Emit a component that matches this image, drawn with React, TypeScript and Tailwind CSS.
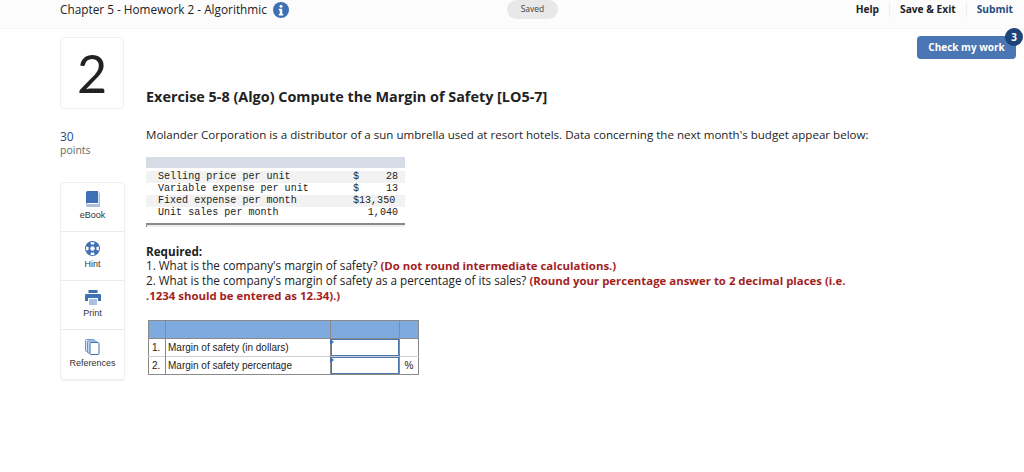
const font = { fontFamily: '"Open Sans", "Lato", sans-serif' }

const budgetRows = [
  { label: 'Selling price per unit', sign: '$', value: '28', shaded: true },
  { label: 'Variable expense per unit', sign: '$', value: '13', shaded: false },
  { label: 'Fixed expense per month', sign: '$13,350', value: '', shaded: true },
  { label: 'Unit sales per month', sign: '', value: '1,040', shaded: false },
]

const InfoIcon = () => (
  <svg width="16" height="16" viewBox="0 0 16 16">
    <circle cx="8" cy="8" r="8" fill="#3f6fb5" />
    <circle cx="8" cy="4.2" r="1.5" fill="#fff" />
    <path d="M5.8 6.8h3.4v5h1v1.6H5.8v-1.6h1v-3.4h-1z" fill="#fff" />
  </svg>
)

const BookIcon = () => (
  <svg width="14" height="16" viewBox="0 0 14 16">
    <path d="M0 1.5A1.5 1.5 0 0 1 1.5 0H12v12H1.5A1.5 1.5 0 0 0 0 13.5z" fill="#3f6fb5" />
    <path d="M12.5 1.5H14V16H1.5A1.5 1.5 0 0 1 0 14.5v-.5a1 1 0 0 1 1-1h11.5z" fill="#a9c0e0" />
  </svg>
)

const HintIcon = () => (
  <svg width="15" height="15" viewBox="0 0 16 16">
    <circle cx="8" cy="8" r="8" fill="#3f6fb5" />
    <circle cx="8" cy="8" r="2.4" fill="#fff" />
    <path d="M5.8 1.2h4.4l-.6 2.6H6.4zM5.8 14.8h4.4l-.6-2.6H6.4zM1.2 5.8v4.4l2.6-.6V6.4zM14.8 5.8v4.4l-2.6-.6V6.4z" fill="#fff" />
  </svg>
)

const PrintIcon = () => (
  <svg width="16" height="15" viewBox="0 0 16 15">
    <rect x="3.5" y="0" width="9" height="3" fill="#3f6fb5" />
    <path d="M1 4h14a1 1 0 0 1 1 1v6h-3V8H3v3H0V5a1 1 0 0 1 1-1z" fill="#3f6fb5" />
    <rect x="4" y="9" width="8" height="6" fill="#a9c0e0" />
  </svg>
)

const RefIcon = () => (
  <svg width="15" height="16" viewBox="0 0 15 16">
    <rect x="0.5" y="0.5" width="9" height="12" rx="1" fill="#dbe5f3" stroke="#6f95cc" />
    <rect x="2.5" y="2" width="9" height="12" rx="1" fill="#c5d6ec" stroke="#6f95cc" />
    <rect x="5" y="3.5" width="9" height="12" rx="1" fill="#fff" stroke="#3f6fb5" />
  </svg>
)

const tools = [
  { label: 'eBook', icon: <BookIcon /> },
  { label: 'Hint', icon: <HintIcon /> },
  { label: 'Print', icon: <PrintIcon /> },
  { label: 'References', icon: <RefIcon /> },
]

function AnswerInput() {
  return (
    <div className="relative h-full w-full border-[1.5px] border-[#4a76b0] bg-white">
      <div className="absolute left-[-2px] top-[-1px] h-0 w-0 border-y-[3px] border-l-[4px] border-y-transparent border-l-[#3f6fb5]" />
    </div>
  )
}

export default function App() {
  return (
    <div className="h-[472px] w-[1024px] overflow-hidden bg-white text-[#222]" style={font}>
      <header className="flex h-[29px] items-center border-b border-[#f5f5f5] bg-[#fcfcfc] pl-[60px] pr-[11px]">
        <div className="flex w-[430px] items-center gap-[6px] pb-[9px] text-[11.8px]">
          <span>Chapter 5 - Homework 2 - Algorithmic</span>
          <InfoIcon />
        </div>
        <div className="mb-[9px] ml-[17px] flex h-[19px] w-[51px] items-center justify-center rounded-full bg-[#e8e8e8] text-[8.5px] text-[#444]">Saved</div>
        <nav className="ml-auto flex items-center pb-[9px] text-[10.2px] font-bold">
          <span className="border-r border-[#eee] pr-[10px]">Help</span>
          <span className="border-r border-[#eee] pl-[10px] pr-[10px]">Save &amp; Exit</span>
          <span className="pl-[10px] text-[#2a4d80]">Submit</span>
        </nav>
      </header>

      <div className="flex pl-[60px]">
        <aside className="w-[86px] shrink-0 pt-[8px]">
          <div className="flex h-[72px] w-[64px] items-center justify-center rounded border border-[#f0f0f0] text-[52px] leading-none" style={{ fontFamily: '"Lato", sans-serif' }}>2</div>
          <div className="mt-[21px] text-[12px] leading-[14px] text-[#2a4d80]">30</div>
          <div className="text-[10.5px] leading-[13px] text-[#666]">points</div>
          <div className="mt-[25px] w-[65px] rounded border border-[#f0f0f0] shadow-[0_1px_1px_#eee]">
            {tools.map((t) => (
              <div key={t.label} className="flex h-[49px] flex-col items-center justify-end border-b border-[#eaeaea] pb-[10px] last:border-b-0">
                {t.icon}
                <span className="mt-[3px] text-[9px] leading-[11px] text-[#333]" style={{ fontFamily: '"Liberation Sans", sans-serif' }}>{t.label}</span>
              </div>
            ))}
          </div>
        </aside>

        <main className="w-[771px] shrink-0">
          <h1 className="mt-[58px] text-[14.4px] font-bold leading-[20px]">Exercise 5-8 (Algo) Compute the Margin of Safety [LO5-7]</h1>
          <p className="mt-[19px] text-[11.57px] leading-[18px]">Molander Corporation is a distributor of a sun umbrella used at resort hotels. Data concerning the next month's budget appear below:</p>

          <div className="mt-[13px] w-[259px]">
            <div className="h-[11px] bg-[#d6dce5]" />
            <div className="pt-[3px] text-[10.05px] leading-[12px]" style={{ fontFamily: '"Liberation Mono", monospace' }}>
              {budgetRows.map((r) => (
                <div key={r.label} className={`flex pl-[12px] pr-[7px] ${r.shaded ? 'bg-[#f2f2f2]' : ''}`}>
                  <span className="w-[195px]">{r.label}</span>
                  <span className="w-[14px] whitespace-nowrap">{r.sign}</span>
                  <span className="flex-1 text-right">{r.value}</span>
                </div>
              ))}
            </div>
            <div className="mt-[4px] h-[4px] border-l border-t-2 border-[#8a8a8a] bg-[#eee]" />
          </div>

          <div className="mt-[17px] text-[11.7px] leading-[14px]">
            <div className="font-bold">Required:</div>
            <div>1. What is the company's margin of safety? <b className="text-[11.4px] text-[#a31f1f]">(Do not round intermediate calculations.)</b></div>
            <div>2. What is the company's margin of safety as a percentage of its sales? <b className="text-[11.4px] text-[#a31f1f]">(Round your percentage answer to 2 decimal places (i.e.</b></div>
            <div><b className="text-[11.4px] text-[#a31f1f]">.1234 should be entered as 12.34).)</b></div>
          </div>

          <table className="ml-[2px] mt-[17px] border-collapse border border-[#8a8a8a] text-[10px]" style={{ fontFamily: '"Liberation Sans", sans-serif' }}>
            <tbody>
              <tr className="h-[18px] bg-[#7faadf]">
                <td className="w-[17px] border border-[#8a8a8a]" />
                <td className="w-[165px] border border-[#8a8a8a]" />
                <td className="w-[69px] border border-[#8a8a8a]" />
                <td className="w-[19px] border border-[#8a8a8a]" />
              </tr>
              <tr className="h-[18px]">
                <td className="border-r border-[#8a8a8a] pl-[3px]">1.</td>
                <td className="border-r border-[#8a8a8a] pl-[2px]">Margin of safety (in dollars)</td>
                <td className="h-[18px] border-r border-[#8a8a8a] p-0"><AnswerInput /></td>
                <td />
              </tr>
              <tr className="h-[18px] border-t border-[#d0d0d0]">
                <td className="border-r border-[#8a8a8a] pl-[3px]">2.</td>
                <td className="border-r border-[#8a8a8a] pl-[2px]">Margin of safety percentage</td>
                <td className="h-[18px] border-r border-[#8a8a8a] p-0"><AnswerInput /></td>
                <td className="text-center">%</td>
              </tr>
            </tbody>
          </table>
        </main>

        <div className="flex items-start pt-[7px]">
          <button className="relative h-[23px] w-[99px] rounded-sm bg-[#4a76b3] text-[10px] font-bold text-white">
            Check my work
            <span className="absolute -right-[7px] -top-[8px] flex h-[18px] w-[18px] items-center justify-center rounded-full bg-[#1f4479] text-[10px] font-bold">3</span>
          </button>
        </div>
      </div>
    </div>
  )
}
